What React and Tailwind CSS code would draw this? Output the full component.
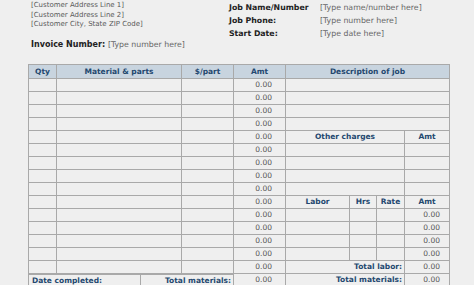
import React from "react";

const B = "border border-[#a9a9a9]";
const H = "text-[#24486f] font-bold";

function Row({ children, h = "h-[13px]" }) {
  return <tr className={h}>{children}</tr>;
}

export default function App() {
  const cols = [28, 84, 41, 52, 52, 64, 27, 28, 45];
  const amt = <td className={`${B} text-right pr-[13px] text-[#555]`}>0.00</td>;
  const amt2 = <td className={`${B} text-right pr-[9px] text-[#555]`}>0.00</td>;
  const left = (
    <>
      <td className={B}></td>
      <td className={B} colSpan={2}></td>
      <td className={B}></td>
      {amt}
    </>
  );
  return (
    <div
      className="w-[474px] h-[285px] overflow-hidden bg-[#efefef] relative"
      style={{ fontFamily: '"DejaVu Sans", Verdana, sans-serif' }}
    >
      <div className="flex h-[64px]">
        <div className="w-[229px] pl-[31px] pt-[1px]">
          <div className="text-[7px] leading-[9.7px] text-[#5a5a5a]">
            <div>[Customer Address Line 1]</div>
            <div>[Customer Address Line 2]</div>
            <div>[Customer City, State ZIP Code]</div>
          </div>
          <div className="mt-[10px] text-[8px] leading-[10px] whitespace-nowrap">
            <span className="font-bold text-[#222]">Invoice Number: </span>
            <span className="text-[#666] text-[7.8px]">[Type number here]</span>
          </div>
        </div>
        <div className="pt-[1px] text-[7.8px] leading-[13px]">
          {[
            ["Job Name/Number", "[Type name/number here]"],
            ["Job Phone:", "[Type number here]"],
            ["Start Date:", "[Type date here]"],
          ].map(([a, b]) => (
            <div key={a} className="flex whitespace-nowrap">
              <div className="w-[91px] font-bold text-[#222]">{a}</div>
              <div className="text-[#666]">{b}</div>
            </div>
          ))}
        </div>
      </div>
      <table className="ml-[28px] border-collapse table-fixed w-[421px] text-[7.5px] leading-none">
        <colgroup>
          {cols.map((w, i) => (
            <col key={i} style={{ width: w }} />
          ))}
        </colgroup>
        <tbody>
          <tr className="h-[14px] bg-[#c8d4df]">
            <td className={`${B} ${H} text-center`}>Qty</td>
            <td className={`${B} ${H} text-center`} colSpan={2}>Material &amp; parts</td>
            <td className={`${B} ${H} text-center`}>$/part</td>
            <td className={`${B} ${H} text-center`}>Amt</td>
            <td className={`${B} ${H} text-center`} colSpan={4}>Description of job</td>
          </tr>
          {[0, 1, 2, 3].map((i) => (
            <Row key={"a" + i}>
              {left}
              <td className={B} colSpan={4}></td>
            </Row>
          ))}
          <Row>
            {left}
            <td className={`${B} ${H} text-center`} colSpan={3}>Other charges</td>
            <td className={`${B} ${H} text-center`}>Amt</td>
          </Row>
          {[0, 1, 2, 3].map((i) => (
            <Row key={"b" + i}>
              {left}
              <td className={B} colSpan={3}></td>
              <td className={B}></td>
            </Row>
          ))}
          <Row>
            {left}
            <td className={`${B} ${H} text-center`}>Labor</td>
            <td className={`${B} ${H} text-center`}>Hrs</td>
            <td className={`${B} ${H} text-center`}>Rate</td>
            <td className={`${B} ${H} text-center`}>Amt</td>
          </Row>
          {[0, 1, 2, 3].map((i) => (
            <Row key={"c" + i}>
              {left}
              <td className={B}></td>
              <td className={B}></td>
              <td className={B}></td>
              {amt2}
            </Row>
          ))}
          <Row>
            {left}
            <td className={`${B} ${H} text-right pr-[2px]`} colSpan={3}>Total labor:</td>
            {amt2}
          </Row>
          <Row>
            <td className={`${B} ${H} text-left pl-[3px] border-t-2`} colSpan={2}>Date completed:</td>
            <td className={`border-y border-[#a9a9a9] ${H} text-right pr-[2px] whitespace-nowrap border-t-2`} colSpan={2}>Total materials:</td>
            {amt}
            <td className={`${B} ${H} text-right pr-[2px]`} colSpan={3}>Total materials:</td>
            {amt2}
          </Row>
        </tbody>
      </table>
    </div>
  );
}
